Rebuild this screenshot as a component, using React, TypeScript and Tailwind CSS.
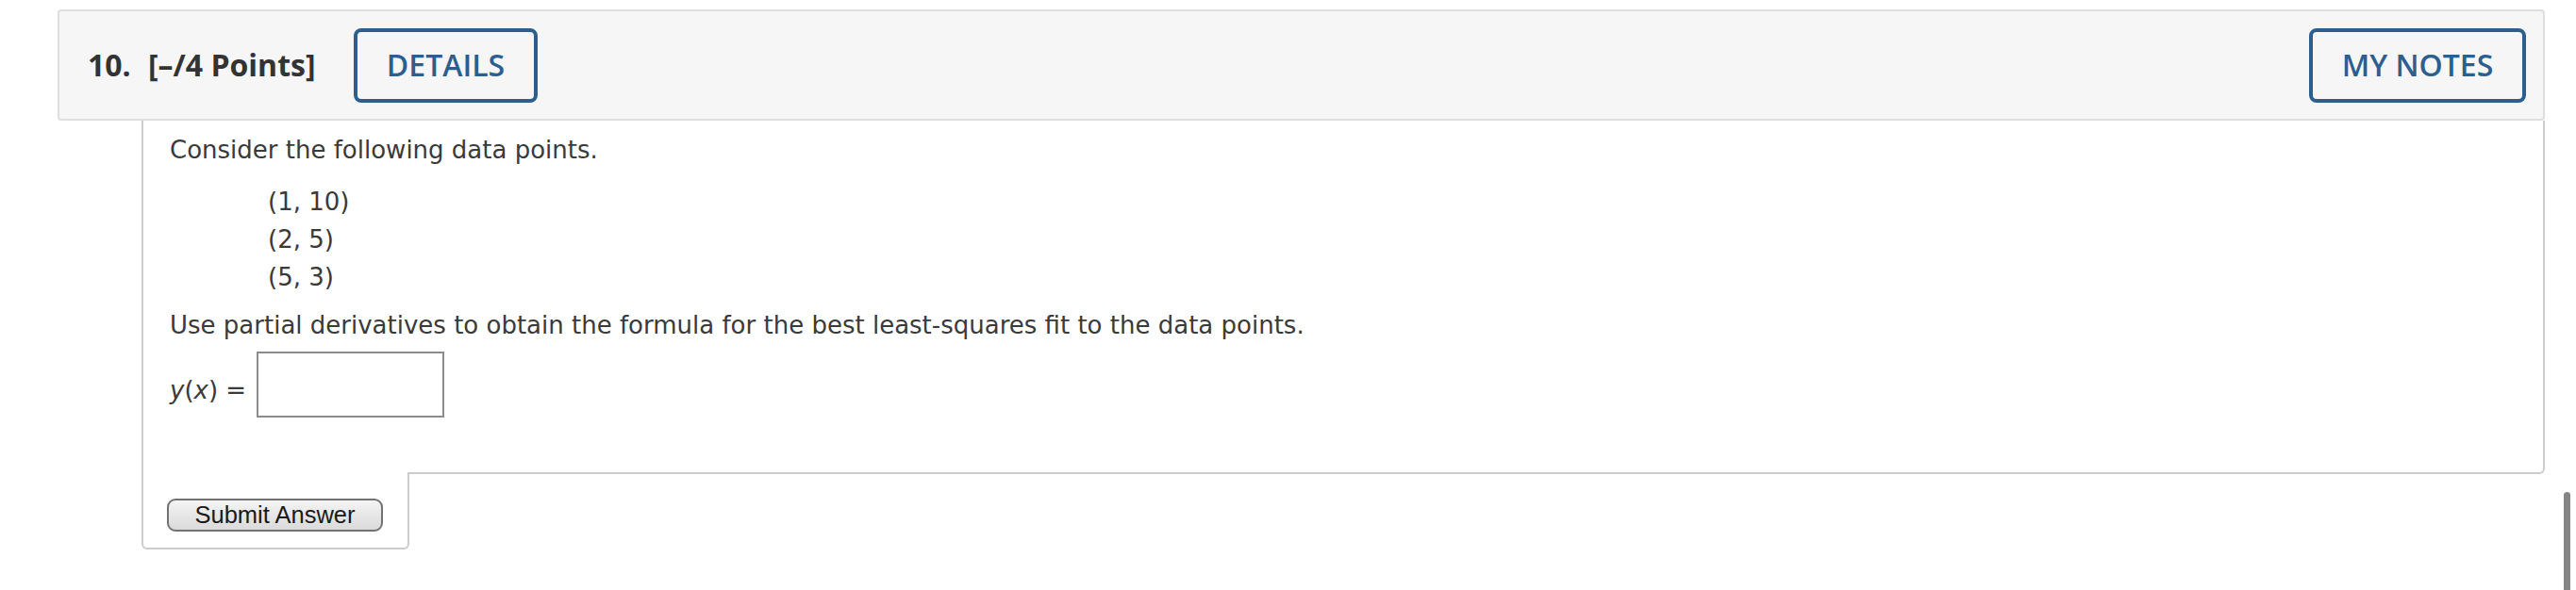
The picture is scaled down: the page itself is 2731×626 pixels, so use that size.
import React from "react";

export default function App() {
  return (
    <div className="relative w-[2731px] h-[626px] overflow-hidden bg-white pt-[10px]">
      {/* Header bar */}
      <div className="ml-[61px] w-[2637px] h-[118px] flex items-center border-2 border-[#dedede] bg-[#f6f6f6] rounded-[4px] pl-[30px] pr-[18px] font-['Open_Sans',sans-serif]">
        <span className="w-[64px] text-[32px] font-bold text-[#333333] leading-none">10.</span>
        <span className="w-[218px] text-[32px] font-bold text-[#333333] leading-none">[–/4 Points]</span>
        <button className="w-[195px] h-[79px] border-4 border-[#2c5f8e] rounded-[8px] text-[32px] font-semibold text-[#2c5f8e] leading-none flex items-center justify-center">
          DETAILS
        </button>
        <button className="ml-auto w-[230px] h-[79px] border-4 border-[#2c5f8e] rounded-[8px] text-[32px] font-semibold text-[#2c5f8e] leading-none flex items-center justify-center">
          MY NOTES
        </button>
      </div>

      {/* Question body */}
      <div className="ml-[150px] w-[2548px]">
        <div className="h-[375px] border-l-2 border-r-2 border-b-2 border-[#cccccc] rounded-br-[6px] pl-[28px] pt-[11px] font-['DejaVu_Sans',Verdana,sans-serif] text-[26px] leading-[40px] text-[#3a3a3a]">
          <p>Consider the following data points.</p>
          <div className="mt-[15px] pl-[104px]">
            <p>(1, 10)</p>
            <p>(2, 5)</p>
            <p>(5, 3)</p>
          </div>
          <p className="mt-[11px]">
            Use partial derivatives to obtain the formula for the best least-squares fit to the data points.
          </p>
          <div className="mt-[8px] flex items-start">
            <span className="mt-[21px] whitespace-pre">
              <i>y</i>(<i>x</i>) =
            </span>
            <div className="ml-[11px] w-[199px] h-[70px] border-2 border-[#8c8c8c] bg-white" />
          </div>
        </div>

        {/* Submit tab */}
        <div className="relative z-10 -mt-[2px] w-[284px] h-[82px] bg-white border-l-2 border-r-2 border-b-2 border-[#cccccc] rounded-b-[6px] pl-[25px] pt-[28px]">
          <button className="w-[229px] h-[35px] border-2 border-[#727272] rounded-[9px] bg-gradient-to-b from-[#f4f4f4] to-[#dadada] font-['Liberation_Sans',Arial,sans-serif] text-[25.5px] leading-none text-[#1a1a1a] flex items-center justify-center">
            Submit Answer
          </button>
        </div>
      </div>

      {/* Scrollbar thumb overlay */}
      <div className="absolute left-[2718px] top-[522px] w-[7px] h-[140px] rounded-full bg-[#858585]" />
    </div>
  );
}
